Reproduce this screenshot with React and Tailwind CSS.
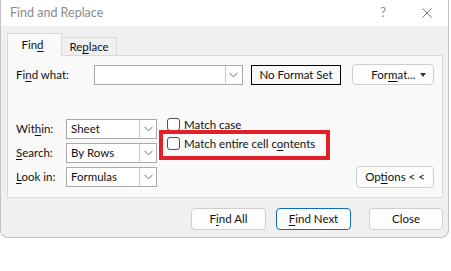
import React from 'react';

const U = ({ children }) => <span className="underline underline-offset-2">{children}</span>;

const Chevron = () => (
  <svg width="9" height="6" viewBox="0 0 9 6" fill="none">
    <path d="M0.5 0.8 L4.5 4.8 L8.5 0.8" stroke="#6b6b6b" strokeWidth="1" />
  </svg>
);

const Select = ({ value }) => (
  <div className="flex h-[20px] w-[91px] items-stretch border border-[#a9a9a9] bg-white">
    <div className="flex flex-1 items-center pl-[4px] text-[11.5px] text-[#111]">{value}</div>
    <div className="flex w-[17px] items-center justify-center border-l border-[#c8c8c8]">
      <Chevron />
    </div>
  </div>
);

const Checkbox = ({ children }) => (
  <div className="flex h-[19px] items-center">
    <div className="h-[13px] w-[13px] rounded-[3px] border border-[#505050] bg-white" />
    <span className="ml-[4px] text-[11.5px] text-[#111]">{children}</span>
  </div>
);

const Button = ({ children, className = '' }) => (
  <div
    className={`flex items-center justify-center rounded-[4px] border bg-[#fdfdfd] text-[11.5px] text-[#111] ${className}`}
  >
    {children}
  </div>
);

export default function App() {
  return (
    <div className="h-[271px] w-[451px] bg-white" style={{ fontFamily: 'Lato, "Noto Sans", sans-serif' }}>
      <div className="flex h-[238px] w-[449px] flex-col rounded-b-[8px] border-b border-r border-l border-[#c2c2c2] bg-[#f0f0f0]">
        {/* title bar */}
        <div className="flex h-[26px] items-center bg-white pl-[9px] pr-[16px]">
          <span className="text-[12.5px] text-[#8c8c8c]">Find and Replace</span>
          <span className="ml-auto text-[13px] text-[#8c8c8c]">?</span>
          <svg className="ml-[36px]" width="10" height="10" viewBox="0 0 10 10">
            <path d="M0.5 0.5 L9.5 9.5 M9.5 0.5 L0.5 9.5" stroke="#7a7a7a" strokeWidth="1" />
          </svg>
        </div>

        <div className="flex flex-1 flex-col pl-[6px] pr-[5px] pt-[7px]">
          {/* tabs */}
          <div className="relative z-10 flex items-end">
            <div className="-mb-px flex h-[23px] w-[55px] items-center justify-center border border-b-0 border-[#d9d9d9] bg-[#f9f9f9] pr-[4px] text-[11.5px] text-[#111]">
              <span>
                Fin<U>d</U>
              </span>
            </div>
            <div className="flex h-[18px] w-[55px] items-center justify-center border border-b-0 border-l-0 border-[#d9d9d9] bg-[#f0f0f0] text-[11.5px] text-[#111]">
              <span>
                Re<U>p</U>lace
              </span>
            </div>
          </div>

          {/* panel */}
          <div className="relative flex h-[143px] flex-col border border-[#d9d9d9] bg-[#f9f9f9] pl-[8px] pr-[8px] pt-[8px]">
            <div className="flex items-center">
              <span className="w-[78px] text-[11.5px] text-[#111]">
                Fi<U>n</U>d what:
              </span>
              <div className="flex h-[20px] w-[150px] items-stretch border border-[#a9a9a9] bg-white">
                <div className="flex-1" />
                <div className="flex w-[17px] items-center justify-center border-l border-[#c8c8c8]">
                  <Chevron />
                </div>
              </div>
              <div className="ml-[8px] flex h-[20px] w-[91px] items-center justify-center border-[1.5px] border-black bg-[#fafafa] text-[11.5px] text-[#111]">
                No Format Set
              </div>
              <Button className="ml-[11px] h-[21px] w-[82px] border-[#cfcfcf] pl-[18px]">
                <span>
                  For<U>m</U>at...
                </span>
                <svg className="ml-auto mr-[7px]" width="6" height="4" viewBox="0 0 6 4">
                  <path d="M0 0 L6 0 L3 4 Z" fill="#333" />
                </svg>
              </Button>
            </div>

            <div className="mt-[34px] flex items-end">
              <div className="flex flex-col gap-[4px]">
                {[
                  [<>Wit<U>h</U>in:</>, 'Sheet'],
                  [<><U>S</U>earch:</>, 'By Rows'],
                  [<><U>L</U>ook in:</>, 'Formulas'],
                ].map(([label, value], i) => (
                  <div key={i} className="flex items-center">
                    <span className="w-[50px] text-[11.5px] text-[#111]">{label}</span>
                    <Select value={value} />
                  </div>
                ))}
              </div>
              <div className="ml-[10px] mt-[-4px] flex flex-col self-start">
                <Checkbox>Match case</Checkbox>
                <Checkbox>
                  Match entire cell c<U>o</U>ntents
                </Checkbox>
              </div>
              <Button className="mb-[-1px] ml-auto h-[22px] w-[78px] border-[#cfcfcf]">
                <span>
                  Op<U>t</U>ions &lt; &lt;
                </span>
              </Button>
            </div>

            {/* red highlight annotation */}
            <div className="absolute left-[151px] top-[74px] h-[30px] w-[171px] border-[4px] border-[#e3202a]" />
          </div>

          {/* bottom buttons */}
          <div className="mt-[10px] flex justify-end">
            <Button className="h-[22px] w-[75px] border-[#cfcfcf]">
              <span>
                F<U>i</U>nd All
              </span>
            </Button>
            <Button className="ml-[10px] h-[22px] w-[75px] border-[#0f6cbd]">
              <span>
                <U>F</U>ind Next
              </span>
            </Button>
            <Button className="ml-[18px] h-[22px] w-[74px] border-[#cfcfcf]">Close</Button>
          </div>
        </div>
      </div>
    </div>
  );
}
